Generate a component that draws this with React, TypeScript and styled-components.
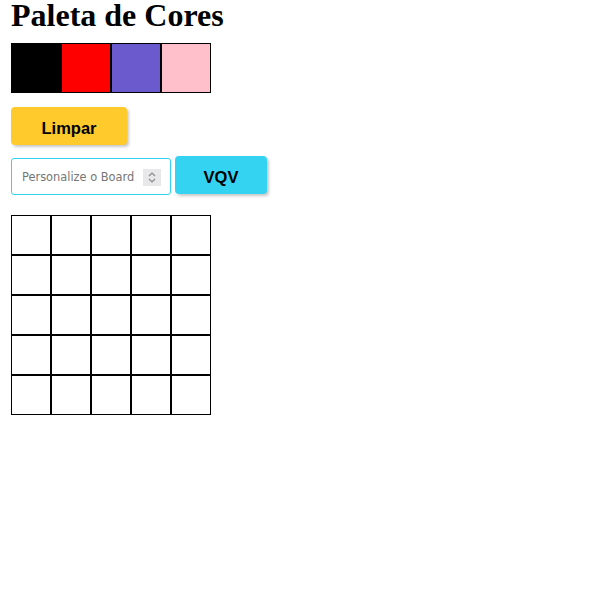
import React from "react";
import styled, { createGlobalStyle } from "styled-components";

const GlobalStyle = createGlobalStyle`
  html, body { margin: 0; padding: 0; background: #ffffff; }
  body { font-family: "Liberation Serif", "Times New Roman", serif; }
`;

const Page = styled.main`
  display: flex;
  flex-direction: column;
  align-items: flex-start;
  padding: 0 11px;
`;

const Title = styled.h1`
  margin: 0;
  font-family: "Liberation Serif", "Times New Roman", serif;
  font-size: 32px;
  font-weight: 700;
  line-height: 30px;
  color: #000;
`;

const Palette = styled.div`
  display: flex;
  margin-top: 13px;
`;

const Swatch = styled.div<{ $color: string }>`
  width: 48px;
  height: 48px;
  border: 1px solid #000;
  background: ${(p) => p.$color};
`;

const ActionButton = styled.button<{ $bg: string; $w: number }>`
  box-sizing: border-box;
  width: ${(p) => p.$w}px;
  height: 38px;
  border: none;
  border-radius: 4px;
  background: ${(p) => p.$bg};
  box-shadow: 2px 2px 3px rgba(0, 0, 0, 0.22);
  font-family: "Liberation Sans", Arial, sans-serif;
  font-size: 16.5px;
  font-weight: 700;
  color: #000;
  padding: 4px 0 0 0;
  cursor: pointer;
`;

const ClearRow = styled.div`
  margin-top: 14px;
`;

const SizeRow = styled.div`
  display: flex;
  align-items: flex-start;
  gap: 4px;
  margin-top: 11px;
`;

const InputBox = styled.label`
  box-sizing: border-box;
  width: 160px;
  height: 37px;
  margin-top: 2px;
  border: 1px solid #33d1f2;
  border-radius: 3px;
  display: flex;
  align-items: center;
  padding: 0 9px 0 10px;
  gap: 6px;
  background: #fff;
`;

const SizeInput = styled.input`
  flex: 1;
  min-width: 0;
  border: none;
  outline: none;
  padding: 1px 0 0 0;
  background: transparent;
  font-family: "DejaVu Sans", Verdana, sans-serif;
  font-size: 11.4px;
  color: #222;
  &::placeholder { color: #767676; }
  &::-webkit-inner-spin-button,
  &::-webkit-outer-spin-button { -webkit-appearance: none; margin: 0; }
  -moz-appearance: textfield;
`;

const Spinner = styled.span`
  width: 18px;
  height: 17px;
  background: #e8e8ea;
  display: flex;
  align-items: center;
  justify-content: center;
  margin-top: 1px;
`;

const Board = styled.div`
  display: grid;
  grid-template-columns: repeat(5, 40px);
  grid-auto-rows: 40px;
  margin-top: 20px;
`;

const Pixel = styled.div`
  box-sizing: border-box;
  border: 1px solid #000;
  background: #fff;
`;

const colors = ["#000000", "#ff0000", "#6a5acd", "#ffc0cb"];

export default function App() {
  return (
    <>
      <GlobalStyle />
      <Page>
        <Title>Paleta de Cores</Title>
        <Palette>
          {colors.map((c) => (
            <Swatch key={c} $color={c} />
          ))}
        </Palette>
        <ClearRow>
          <ActionButton $bg="#ffca2c" $w={116}>Limpar</ActionButton>
        </ClearRow>
        <SizeRow>
          <InputBox>
            <SizeInput type="number" min={1} placeholder="Personalize o Board" />
            <Spinner>
              <svg width="10" height="13" viewBox="0 0 10 13" fill="none" stroke="#8a8a8a" strokeWidth="1.2">
                <path d="M2 5 L5 2 L8 5" />
                <path d="M2 8 L5 11 L8 8" />
              </svg>
            </Spinner>
          </InputBox>
          <ActionButton $bg="#35d3f2" $w={92}>VQV</ActionButton>
        </SizeRow>
        <Board>
          {Array.from({ length: 25 }).map((_, i) => (
            <Pixel key={i} />
          ))}
        </Board>
      </Page>
    </>
  );
}
